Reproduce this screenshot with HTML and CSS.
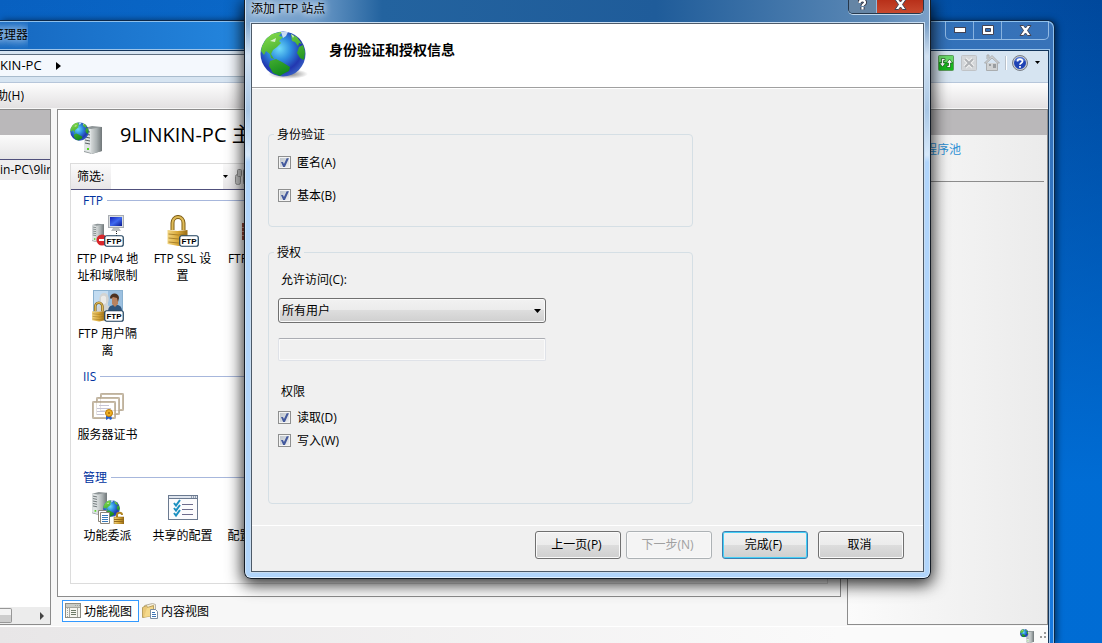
FILE: index.html
```html
<!DOCTYPE html>
<html lang="zh-CN">
<head>
  <meta charset="UTF-8" />
  <meta name="viewport" content="width=device-width, initial-scale=1" />
  <title>添加 FTP 站点</title>
  <link rel="stylesheet" href="styles.css">
</head>
<body>

  <!-- shared icon parts -->
  <svg class="defs" width="0" height="0" aria-hidden="true">
    <defs>
      <radialGradient id="sea" cx="42%" cy="38%" r="62%">
        <stop offset="0" stop-color="#6fdcf8" />
        <stop offset="0.4" stop-color="#2f8fe0" />
        <stop offset="0.8" stop-color="#2237b0" />
        <stop offset="1" stop-color="#3358c0" />
      </radialGradient>
      <linearGradient id="land" x1="0" y1="0" x2="0.4" y2="1">
        <stop offset="0" stop-color="#8be04e" />
        <stop offset="1" stop-color="#128a1c" />
      </linearGradient>
      <linearGradient id="steel" x1="0" y1="0" x2="1" y2="0">
        <stop offset="0" stop-color="#d5d9d9" />
        <stop offset="0.5" stop-color="#a9b0b1" />
        <stop offset="1" stop-color="#6f7678" />
      </linearGradient>
      <linearGradient id="gold" x1="0" y1="0" x2="1" y2="0">
        <stop offset="0" stop-color="#f3d682" />
        <stop offset="0.5" stop-color="#d9a93a" />
        <stop offset="1" stop-color="#9a6c14" />
      </linearGradient>
      <linearGradient id="screen" x1="0" y1="0" x2="1" y2="1">
        <stop offset="0" stop-color="#1220b8" />
        <stop offset="0.5" stop-color="#3f6af0" />
        <stop offset="1" stop-color="#0a1790" />
      </linearGradient>
      <radialGradient id="shade">
        <stop offset="0" stop-color="#555" stop-opacity="0.8" />
        <stop offset="1" stop-color="#555" stop-opacity="0" />
      </radialGradient>
    </defs>
    <symbol id="globe" viewBox="0 0 46 46">
      <circle cx="23" cy="23" r="22.5" fill="url(#sea)" />
      <path fill="url(#land)" d="M20 1 12 3 6 8 2 15 1 20l3 4 2-4 4 3 1 4 3 1-3-5 2-4 4-3 4-4-2-2 4-4-4-1 3-4zM31 3l6 3 5 7-3-1-1 3-3-4-3-1zM39 16l4-2 2 7-1 8-4-2-3-5zM10 30l6-2 6 3 8 5-1 4-6 3-3 2-7-3-4-7z" />
      <path fill="#fff" opacity="0.75" d="m21 1 7 0-2 4-3 2zM31 3l3 2-1 2zM10 10l6-3-1 4z" />
    </symbol>
    <symbol id="server" viewBox="0 0 18 28">
      <path fill="#8f9698" d="M0 2 8 0l10 1v24L8 28 0 26z" />
      <path fill="#dfe3e4" d="M0 2 7 3v24l-7-2z" />
      <path fill="url(#steel)" d="M7 3l11-2v24L7 28z" />
      <path stroke="#596264" d="M1 5l5 1M1 8l5 1M1 11l5 1M1 14l5 1M1 17l5 1" />
      <path fill="#55d820" d="M3 22h2v2H3z" />
    </symbol>
    <symbol id="ftp-badge" viewBox="0 0 20 12">
      <rect x="0.75" y="0.75" width="18.5" height="10.5" rx="2" fill="#fff" stroke="#1c3f5c" stroke-width="1.2" />
      <text x="10" y="9" text-anchor="middle" class="badge-text">FTP</text>
    </symbol>
    <symbol id="lock" viewBox="0 0 20 31">
      <path d="M5 15V8a5 5.500 0 0 1 11 0v7" fill="none" stroke="#80601a" stroke-width="4" />
      <path d="M5 15V8a5 5.500 0 0 1 11 0v7" fill="none" stroke="#dfbb57" stroke-width="2" />
      <path d="m0 15 10 1 10-1v14l-9 2-11-2z" fill="url(#gold)" />
      <path d="M1 19l10 1 8-1M1 23l10 1 8-1M1 27l10 1 8-1" fill="none" stroke="#9b7421" stroke-width="0.8" />
    </symbol>
    <symbol id="globe-server" viewBox="0 0 32 32">
      <use href="#server" x="14" y="4" width="18" height="28" />
      <use href="#globe" x="0" y="0" width="19" height="19" />
    </symbol>
  </svg>

  <section class="window manager">
    <header class="manager-title">
      <div class="clip title-clip"><span>管理器</span></div>
      <div class="caption-buttons">
        <button aria-label="最小化"><svg width="12" height="6" viewBox="0 0 12 6"><rect x="0.5" y="0.5" width="11" height="5" fill="#fff" stroke="#445" /></svg></button>
        <button aria-label="最大化"><svg width="12" height="10" viewBox="0 0 12 10"><path fill="#fff" stroke="#445" fill-rule="evenodd" d="M0.500 0.500h11v9h-11zM3.500 3.500v3h5v-3z" /></svg></button>
        <button class="wide" aria-label="关闭"><svg width="13" height="11" viewBox="0 0 13 11"><path fill="#fff" stroke="#445" d="M1 .5h3.500l2 2.500 2-2.500H12L8.500 5.500l3.500 5H8.500l-2-2.500-2 2.500H1l3.500-5z" /></svg></button>
      </div>
    </header>

    <div class="manager-client">
      <div class="nav-bar">
        <div class="address"><span>KIN-PC</span><svg width="5" height="8" viewBox="0 0 5 8"><path d="m0 0 5 4-5 4z" /></svg></div>
        <div class="nav-tools">
          <button aria-label="刷新"><svg width="16" height="16" viewBox="0 0 16 16"><rect x="0.5" y="0.5" width="15" height="15" rx="1" fill="#16b81c" stroke="#5a9a5a" /><path fill="#8be58a" opacity="0.7" d="M1 1h14v6H1z" /><path fill="#fff" stroke="#145c16" stroke-width="0.700" d="M7 3.500H3.500V8H1.500l3 4 3-4h-2V5.500H7zM9 12.500h3.500V8h2l-3-4-3 4h2v2.500H9z" /></svg></button>
          <button aria-label="停止"><svg width="16" height="16" viewBox="0 0 16 16"><rect x="0.5" y="0.5" width="15" height="15" rx="1" fill="#d3d6d9" stroke="#c0c3c6" /><path stroke="#f2f2f2" stroke-width="4" d="m4 4 8 8m0-8-8 8" /><path stroke="#b0b3b6" stroke-width="2" d="m4 4 8 8m0-8-8 8" /></svg></button>
          <button aria-label="主页"><svg width="16" height="17" viewBox="0 0 16 17"><path fill="#d0d2d3" stroke="#aaadaf" d="M2.500 9v7.500h11V9M0.500 9 8 1.500 15.500 9h-2L8 4 2.500 9zM3 5V1h2v3" /><path fill="#999da0" d="M5 10h2v2H5zM9 10h3v4H9z" /></svg></button>
          <i class="divider"></i>
          <button aria-label="帮助"><svg width="16" height="16" viewBox="0 0 16 16"><circle cx="8" cy="8" r="7.500" fill="#c9ccd2" stroke="#777d86" /><circle cx="8" cy="8" r="6" fill="#1f43b5" /><path fill="#6f93e6" opacity="0.6" d="M3 6a5 4 0 0 1 10 0z" /><path fill="none" stroke="#fff" stroke-width="1.800" d="M5.500 6.500C5.500 3.500 10.500 3.500 10.500 6.300 10.500 8 8 8 8 9.800M8 11v1.800" /></svg></button>
          <svg width="5" height="3" viewBox="0 0 5 3"><path d="M0 0h5L2.500 3z" /></svg>
        </div>
      </div>

      <div class="menu-bar"><div class="clip menu-clip"><span>帮助(H)</span></div></div>

      <div class="panes">
        <aside class="tree-pane">
          <div class="pane-head"></div>
          <div class="tree-tools"></div>
          <div class="tree-row">in-PC\9lin</div>
          <div class="scroll-bar"><i class="thumb"></i><svg width="4" height="8" viewBox="0 0 4 8"><path fill="#444" d="m0 0 4 4-4 4z" /></svg></div>
        </aside>

        <main class="center">
          <div class="home">
            <div class="home-head">
              <svg width="32" height="32"><use href="#globe-server" /></svg>
              <h1>9LINKIN-PC 主页</h1>
            </div>
            <div class="features">
              <div class="filter">
                <label for="filter">筛选:</label>
                <input id="filter" type="text">
                <svg width="5" height="3" viewBox="0 0 5 3"><path d="M0 0h5L2.500 3z" /></svg>
                <svg class="find" width="16" height="16" viewBox="0 0 16 16"><g fill="#c4c4c4" stroke="#8c8c8c"><rect x="0.500" y="5.500" width="5" height="10" rx="2" /><rect x="2.500" y="0.500" width="4" height="7" rx="1" /><rect x="8.500" y="5.500" width="5" height="10" rx="2" /><rect x="8.500" y="0.500" width="4" height="7" rx="1" /></g></svg>
              </div>

              <section class="group">
                <h2>FTP</h2>
                <div class="items">
                  <a href="#" class="item">
                    <svg width="32" height="32" viewBox="0 0 32 32">
                      <use href="#server" x="0" y="8" width="12" height="20" />
                      <circle cx="10" cy="25" r="5.500" fill="#d8262a" /><path stroke="#fff" stroke-width="2" d="M7 25h6" />
                      <rect x="16.500" y="0.500" width="15" height="12" fill="#d9dde0" stroke="#a9adb2" /><path fill="url(#screen)" d="M18 2h12v9H18z" />
                      <path fill="#b9bdc0" d="M21 13h6l2 3H19z" /><path stroke="#222" stroke-dasharray="1 1" d="M24.500 16v5" />
                      <use href="#ftp-badge" x="12" y="20" width="20" height="12" />
                    </svg>
                    <span>FTP IPv4 地址和域限制</span>
                  </a>
                  <a href="#" class="item">
                    <svg width="32" height="32" viewBox="0 0 32 32">
                      <use href="#lock" x="0" y="0" width="21" height="31" />
                      <use href="#ftp-badge" x="12" y="20" width="20" height="12" />
                    </svg>
                    <span>FTP SSL 设置</span>
                  </a>
                  <a href="#" class="item">
                    <svg width="32" height="32" viewBox="0 0 32 32"><path fill="#9c4a3c" d="M0 8h24v17H0z" /><path stroke="#d9a596" d="M0 12.500h24M0 16.500h24M0 20.500h24" /><use href="#ftp-badge" x="12" y="20" width="20" height="12" /></svg>
                    <span>FTP 防火墙支持</span>
                  </a>
                </div>
                <div class="items">
                  <a href="#" class="item">
                    <svg width="32" height="32" viewBox="0 0 32 32">
                      <rect x="1.500" y="0.500" width="29" height="22" fill="#c3dcf1" stroke="#8ab1d0" />
                      <path fill="#9cc0e0" d="M16 1h14v21H16z" />
                      <path fill="#d3d4d2" d="M5 22c0-6 2-6 4-7-3-4-2-12 3-12s6 7 3 12c2 1 4 2 4 7z" /><path fill="#ecebe8" d="M9 7c2-2 4-1 5 0v6l-3 2-2-2z" />
                      <path fill="#31557d" d="M16 22c0-5 2-6 5-7h5c3 1 4 3 4 7z" /><path fill="#b98260" d="M20 7h6v7l-3 3-3-3z" /><path fill="#4d3120" d="M18 8c0-6 9-6 9 0l-1 4-1-4-4-1-2 2z" />
                      <use href="#lock" x="0" y="11" width="13" height="21" />
                      <use href="#ftp-badge" x="12" y="20" width="20" height="12" />
                    </svg>
                    <span>FTP 用户隔离</span>
                  </a>
                </div>
              </section>

              <section class="group">
                <h2>IIS</h2>
                <div class="items">
                  <a href="#" class="item">
                    <svg width="32" height="32" viewBox="0 0 32 32">
                      <g fill="#fff" stroke="#c9bda8" stroke-width="2">
                        <rect x="9" y="3" width="22" height="16" rx="1" /><rect x="5" y="7" width="22" height="16" rx="1" /><rect x="1" y="11" width="22" height="16" rx="1" />
                      </g>
                      <g fill="none" stroke="#9c8f7c" stroke-width="0.500" stroke-dasharray="1 1"><rect x="8.500" y="2.500" width="23" height="17" /><rect x="4.500" y="6.500" width="23" height="17" /><rect x="0.500" y="10.500" width="23" height="17" /></g>
                      <path stroke="#c6c4d4" d="M7 14.500h10M5 17.500h14M5 20.500h8M5 23.500h7" />
                      <path fill="#2460d0" d="m14 25 0 4 2-1 1-1 1 2 2-1-1-4z" /><circle cx="17" cy="22" r="3.500" fill="#efb025" stroke="#b97a0a" /><circle cx="17" cy="22" r="1" fill="#a56a05" />
                    </svg>
                    <span>服务器证书</span>
                  </a>
                </div>
              </section>

              <section class="group">
                <h2>管理</h2>
                <div class="items">
                  <a href="#" class="item">
                    <svg width="32" height="32" viewBox="0 0 32 32">
                      <use href="#server" x="0" y="0" width="15" height="23" />
                      <use href="#globe" x="11" y="8" width="17" height="17" />
                      <path fill="#fff" stroke="#8a8479" d="M6.500 18.500h8v11h-8z" /><path fill="#fff" stroke="#8a8479" d="M8.500 20.500h9v11h-9z" />
                      <path stroke="#3a7ab8" d="M10 23.500h6M10 25.500h6M10 27.500h6M10 29.500h6" />
                      <path fill="none" stroke="#b38622" stroke-width="2" d="M25 26v-3c0-3 5-3 5 0" /><path fill="url(#gold)" stroke="#8d6514" stroke-width="0.500" d="M22 25h10v7H22z" /><path stroke="#94691a" d="M22 27.500h10M22 29.500h10" />
                    </svg>
                    <span>功能委派</span>
                  </a>
                  <a href="#" class="item">
                    <svg width="32" height="32" viewBox="0 0 32 32">
                      <rect x="1.500" y="3.500" width="29" height="24" fill="#fbfbfd" stroke="#6b7a90" /><path fill="#dfe5ee" d="M2 4h28v2H2z" /><path stroke="#6b7a90" d="M2 6.500h28" /><path stroke="#4d5a70" stroke-dasharray="1 1" d="M24 5h5" />
                      <path stroke="#6d6c8d" d="M15 12.500h11M15 17.500h11M15 22.500h11" />
                      <path fill="none" stroke="#1b8fc0" stroke-width="2" d="m7 11 2 2.500L13 8M7 16l2 2.500 4-5.500M7 21l2 2.500 4-5.500" />
                    </svg>
                    <span>共享的配置</span>
                  </a>
                  <a href="#" class="item">
                    <svg width="32" height="32" viewBox="0 0 32 32"><rect x="3.500" y="3.500" width="25" height="24" fill="#fbfbfd" stroke="#6b7a90" /></svg>
                    <span>配置编辑器</span>
                  </a>
                </div>
              </section>
            </div>
          </div>

          <div class="view-tabs">
            <button class="active">
              <svg width="16" height="16" viewBox="0 0 16 16"><rect x="0.500" y="0.500" width="15" height="14" fill="#f6f5ef" stroke="#8b8c84" /><path fill="#c8cbc5" d="M1 1h14v3H1z" /><path stroke="#a5a69e" d="M1 4.500h14M4.500 5v9M12.500 5v9" /><path stroke="#6d7a67" d="M6 7.500h5M6 9.500h5M6 11.500h5" /><path stroke="#a5a69e" stroke-dasharray="1 1" d="M2.500 5v9M10 2.500h5" /></svg>
              <span>功能视图</span>
            </button>
            <button>
              <svg width="16" height="16" viewBox="0 0 16 16"><path fill="#f6efdc" stroke="#b9b3a3" d="M2.500 2.500l8-2 3 1v8h-10z" /><path fill="#e9c878" stroke="#b8a060" d="M0.500 14.500v-10l4-2 1 2 6-2v10z" /><path fill="#f5d98a" d="m2 14 3-9 6-1v9z" /><path fill="#fff" stroke="#7c8da0" d="M8.500 6.500h5l2 2v7h-7z" /><path stroke="#3d75b5" d="M10 9.500h3M10 11.500h4M10 13.500h4" /></svg>
              <span>内容视图</span>
            </button>
          </div>
        </main>

        <aside class="actions">
          <div class="pane-head"></div>
          <a href="#">查看应用程序池</a>
          <hr>
        </aside>
      </div>

      <footer class="status">
        <svg width="14" height="14" viewBox="0 0 32 32"><use href="#globe-server" /></svg>
        <svg width="8" height="8" viewBox="0 0 8 8"><path fill="#999" d="M5 0h2v2H5zM5 4h2v2H5zM1 4h2v2H1z" /></svg>
      </footer>
    </div>
  </section>

  <section class="window dialog" role="dialog" aria-labelledby="dialog-title">
    <header class="dialog-title">
      <span id="dialog-title">添加 FTP 站点</span>
      <div class="caption-buttons">
        <button aria-label="帮助"><svg width="9" height="11" viewBox="0 0 9 11"><path fill="none" stroke="#334" stroke-width="4" d="M1.500 4C1.500 .5 7 .5 7 3.500 7 5.500 4.500 5 4.500 7M4.500 8v2.500" /><path fill="none" stroke="#fff" stroke-width="2.200" d="M1.500 4C1.500 .5 7 .5 7 3.500 7 5.500 4.500 5 4.500 7M4.500 8v2.500" /></svg></button>
        <button class="wide close" aria-label="关闭"><svg width="13" height="11" viewBox="0 0 13 11"><path fill="#fff" stroke="#445" d="M1 .5h3.500l2 2.500 2-2.500H12L8.500 5.500l3.500 5H8.500l-2-2.500-2 2.500H1l3.500-5z" /></svg></button>
      </div>
    </header>

    <form class="dialog-client">
      <div class="banner">
        <svg width="48" height="50" viewBox="0 0 48 50"><ellipse cx="28" cy="44" rx="20" ry="5" fill="url(#shade)" /><use href="#globe" x="0" y="1" width="46" height="46" /></svg>
        <h2>身份验证和授权信息</h2>
      </div>

      <div class="page">
        <fieldset class="auth">
          <legend>身份验证</legend>
          <label class="check"><input type="checkbox" checked><span>匿名(A)</span></label>
          <label class="check"><input type="checkbox" checked><span>基本(B)</span></label>
        </fieldset>

        <fieldset class="access">
          <legend>授权</legend>
          <label class="caption" for="allow">允许访问(C):</label>
          <div class="select">
            <select id="allow"><option>所有用户</option></select>
          </div>
          <input class="users" type="text" aria-label="用户" disabled>
          <p class="caption">权限</p>
          <label class="check"><input type="checkbox" checked><span>读取(D)</span></label>
          <label class="check"><input type="checkbox" checked><span>写入(W)</span></label>
        </fieldset>
      </div>

      <div class="buttons">
        <div class="steps">
          <button type="button">上一页(P)</button>
          <button type="button" disabled>下一步(N)</button>
        </div>
        <button type="button" class="default">完成(F)</button>
        <button type="button">取消</button>
      </div>
    </form>
  </section>

</body>
</html>
```
FILE: styles.css
```css
* {
  box-sizing: border-box;
}
body {
  margin: 0;
  height: 100vh;
  overflow: hidden;
  position: relative;
  background: linear-gradient(180deg, rgba(0, 112, 218, 0), rgba(0, 112, 218, 0.9) 75%), linear-gradient(90deg, #0860c0, #0a68c8 25%, #0658b0 70%, #00489c);
  font: 12px/17px "Open Sans", "Noto Sans CJK SC", sans-serif;
  color: #000;
}
button, input, select {
  font: inherit;
  color: inherit;
}
a {
  color: inherit;
  text-decoration: none;
}
h1, h2, p {
  margin: 0;
  font-weight: normal;
}
svg {
  flex: none;
  display: block;
}
.defs {
  position: absolute;
}
.badge-text {
  font: bold 8px "Liberation Sans", sans-serif;
}
.window {
  position: absolute;
  display: flex;
  flex-direction: column;
}
.clip {
  display: flex;
  justify-content: flex-end;
  overflow: hidden;
  white-space: nowrap;
}

/* caption buttons */
.caption-buttons {
  display: flex;
  align-self: flex-start;
  border: 1px solid rgba(170, 205, 240, 0.8);
  border-top: 0;
  border-radius: 0 0 5px 5px;
  overflow: hidden;
}
.caption-buttons button {
  width: 28px;
  height: 18px;
  padding: 0;
  border: 0;
  border-right: 1px solid rgba(170, 205, 240, 0.7);
  background: none;
  display: flex;
  align-items: center;
  justify-content: center;
}
.caption-buttons .wide {
  width: 46px;
  border-right: 0;
}

/* IIS manager */
.manager {
  top: 20px;
  left: 0;
  right: 47px;
  bottom: 0;
  padding-right: 5px;
  border: 1px solid #0b2748;
  border-width: 1px 1px 0 0;
  border-radius: 0 7px 0 0;
  background: linear-gradient(180deg, rgba(23, 121, 224, 0) 60px, #1779e0 600px), linear-gradient(90deg, #1668c0, #2384dc 22%, #2870bc 70%, #3872b8);
  box-shadow: inset -1px 1px 0 #8ec0ec, 2px 0 6px rgba(0, 0, 0, 0.5);
}
.manager-title {
  height: 29px;
  display: flex;
  justify-content: space-between;
}
.title-clip {
  width: 28px;
  padding-top: 5px;
  text-shadow: 0 0 8px #fff, 0 0 12px #cfe4fa;
}
.manager-client {
  flex: 1;
  min-height: 0;
  display: flex;
  flex-direction: column;
  border: 1px solid #12355c;
  border-width: 1px 1px 0 0;
  box-shadow: 0 0 0 1px #9cc4ea;
  background: #f7f7f7;
}
.nav-bar {
  height: 32px;
  padding: 3px 8px 5px 0;
  display: flex;
  justify-content: space-between;
  background: #d6e4f1;
  border-bottom: 1px solid #b6c6da;
}
.address {
  width: 80%;
  display: flex;
  align-items: center;
  gap: 14px;
  height: 23px;
  background: #f4f8fd;
  border: 1px solid #5f6f80;
  border-width: 1px 0;
  border-bottom-color: #a9bccd;
  font-size: 13px;
}
.nav-tools {
  display: flex;
  align-items: center;
  gap: 7px;
  margin-bottom: 6px;
}
.nav-tools button {
  padding: 0;
  border: 0;
  background: none;
}
.divider {
  width: 2px;
  height: 14px;
  margin: 0 -2px;
  background: #b9c1ca;
  border-right: 1px solid #fff;
}
.menu-bar {
  height: 26px;
  padding-top: 4px;
  background: linear-gradient(#fdfdfd, #e3e1e2);
  border-bottom: 1px solid #f7f7f7;
}
.menu-clip {
  width: 24px;
}
.panes {
  flex: 1;
  min-height: 0;
  display: grid;
  grid-template-columns: 51px 1fr 201px;
  gap: 6px;
  padding-bottom: 1px;
}
.pane-head {
  height: 25px;
  background: #bab8ba;
}
.tree-pane {
  display: flex;
  flex-direction: column;
  border: 1px solid #8c8c8c;
  border-left: 0;
  background: #fff;
  overflow: hidden;
  white-space: nowrap;
}
.tree-tools {
  height: 25px;
  background: linear-gradient(#fbfbfb, #e6e5e6);
  border-bottom: 1px solid #50507c;
}
.tree-row {
  height: 20px;
  line-height: 20px;
  background: #eeedee;
}
.scroll-bar {
  margin-top: auto;
  height: 17px;
  padding-right: 6px;
  display: flex;
  align-items: center;
  justify-content: space-between;
  background: #ececec;
}
.thumb {
  width: 12px;
  height: 15px;
  border: 1px solid #979797;
  border-left: 0;
  border-radius: 0 2px 2px 0;
  background: linear-gradient(#f3f3f3 50%, #cdcdcd 50%);
}
.center {
  min-width: 0;
  min-height: 0;
  display: flex;
  flex-direction: column;
}
.home {
  flex: 1;
  min-height: 0;
  display: flex;
  flex-direction: column;
  padding: 0 12px 12px;
  border: 1px solid #8c8c8c;
  background: #fff;
}
.home-head {
  height: 53px;
  padding-top: 12px;
  display: flex;
  align-items: flex-start;
  gap: 18px;
}
.home-head h1 {
  font-size: 20px;
  line-height: 26px;
}
.features {
  flex: 1;
  min-height: 0;
  border: 1px solid #dcdcdc;
}
.filter {
  height: 26px;
  margin-bottom: 2px;
  display: flex;
  align-items: center;
  background: linear-gradient(#fafafa, #e8e6e8);
  border-bottom: 1px solid #50507c;
}
.filter label {
  width: 40px;
  padding-left: 6px;
}
.filter input {
  width: 112px;
  height: 25px;
  border: 0;
  background: #fff;
}
.filter .find {
  margin-left: 7px;
}
.group {
  padding-bottom: 3px;
}
.group h2 {
  display: flex;
  align-items: center;
  gap: 4px;
  margin: 0 12px 6px;
  font-size: 12px;
  line-height: 17px;
  color: #0033a0;
}
.group h2::after {
  content: "";
  flex: 1;
  height: 1px;
  background: #a7b7dc;
}
.items {
  display: flex;
  margin-left: -1px;
}
.item {
  width: 75px;
  height: 75px;
  padding: 0 4px;
  display: flex;
  flex-direction: column;
  align-items: center;
  gap: 3px;
  text-align: center;
}
.view-tabs {
  display: flex;
  padding: 3px 5px;
}
.view-tabs button {
  height: 22px;
  padding: 0 6px 0 2px;
  display: flex;
  align-items: center;
  gap: 3px;
  border: 1px solid transparent;
  background: none;
}
.view-tabs .active {
  border-color: #3399ff;
  background: #fff;
}
.actions {
  border: 1px solid #8c8c8c;
  background: linear-gradient(90deg, #fbfbfb, #ebebeb);
}
.actions a {
  display: block;
  padding: 6px 0 0 29px;
  color: #2c90d4;
}
.actions hr {
  margin: 23px 3px 0;
  border: 0;
  border-top: 1px solid #8c8c8c;
}
.status {
  height: 17px;
  padding: 1px 1px 0;
  display: flex;
  align-items: center;
  justify-content: flex-end;
  gap: 5px;
  border-top: 1px solid #fff;
  background: linear-gradient(90deg, #e8e6e7, #fafafa 80%);
}

/* add site dialog */
.dialog {
  top: 0;
  left: 244px;
  right: 171px;
  padding: 0 6px 6px;
  border: 1px solid #141c26;
  border-top: 0;
  border-radius: 0 0 7px 7px;
  background: linear-gradient(180deg, rgba(190, 216, 242, 0) 24px, #d3e2f2 56px, #aac8e6 110px, #d6e8fa 155px, #b1d5fb 162px), linear-gradient(90deg, #86acd2, #6f9cc9 10%, #23639f 20%, #1f5c9a 60%, #5b88b5 92%, #7ba0c8);
  box-shadow: inset 0 -1px 0 #e3f1ff, inset 1px 0 0 #cfe3f6, inset -1px 0 0 #cfe3f6, 0 4px 16px 2px rgba(0, 0, 0, 0.8);
}
.dialog-title {
  height: 23px;
  display: flex;
  justify-content: space-between;
  text-shadow: 0 0 6px #fff, 0 0 10px #fff;
}
.dialog-title .caption-buttons {
  height: 14px;
  border-color: #26384c;
  box-shadow: 0 1px 0 #c3d8ec;
}
.dialog-title .caption-buttons button {
  height: 14px;
  padding-bottom: 5px;
  background: #6585a5;
}
.dialog-title .caption-buttons .close {
  background: linear-gradient(#b8301a, #c94b30);
}
.dialog-client {
  display: flex;
  flex-direction: column;
  border: 1px solid #4d5a68;
  box-shadow: 0 0 0 1px #c8ddf2;
  background: #f0f0f0;
}
.banner {
  height: 64px;
  padding: 6px 8px;
  display: flex;
  gap: 21px;
  background: #fff;
  border-bottom: 1px solid #a0a0a0;
}
.banner h2 {
  padding-top: 10px;
  font-size: 14px;
  line-height: 20px;
  font-weight: bold;
}
.page {
  padding: 37px 16px 21px;
  border-top: 1px solid #fff;
}
fieldset {
  max-width: 425px;
  margin: 0;
  border: 1px solid #d5dfe5;
  border-radius: 4px;
  display: flex;
  flex-direction: column;
}
legend {
  padding: 0 3px;
}
.auth {
  padding: 11px 9px 22px 5px;
  gap: 16px;
}
.access {
  margin-top: 17px;
  padding: 10px 9px 54px 5px;
}
.check {
  display: flex;
  align-items: center;
  gap: 6px;
  padding-left: 4px;
}
.access .check {
  margin-bottom: 6px;
}
.check input {
  appearance: none;
  width: 13px;
  height: 13px;
  margin: 0;
  border: 1px solid #8e8f8f;
  background: linear-gradient(135deg, #b8c0c8, #f3f3f3);
  box-shadow: inset 0 0 0 1px #f4f4f4;
}
.check input:checked::after {
  content: "";
  display: block;
  width: 11px;
  height: 11px;
  background: #43599d;
  clip-path: polygon(18% 45%, 36% 45%, 45% 64%, 70% 12%, 90% 12%, 54% 92%, 38% 92%);
}
.caption {
  padding-left: 7px;
}
.select {
  position: relative;
  width: 268px;
  margin: 10px 4px 15px;
}
.select::after {
  content: "";
  position: absolute;
  top: 11px;
  right: 5px;
  width: 7px;
  height: 4px;
  background: #000;
  clip-path: polygon(0 0, 100% 0, 50% 100%);
  pointer-events: none;
}
.select select {
  appearance: none;
  display: block;
  width: 100%;
  height: 25px;
  padding: 0 3px;
}
.select select, .buttons button {
  border: 1px solid #707070;
  border-radius: 3px;
  background: linear-gradient(#f2f2f2, #ebebeb 50%, #dddddd 50%, #cfcfcf);
  box-shadow: inset 0 0 0 1px #fafafa;
}
.users {
  width: 268px;
  height: 23px;
  margin: 0 4px 22px;
  border: 1px solid #dfe2e8;
  border-top-color: #abadb3;
  border-radius: 2px;
  background: #f0f0f0;
  box-shadow: inset 0 0 0 1px #fafafa;
}
p.caption {
  margin-bottom: 9px;
}
.access .check:last-child {
  margin-bottom: 0;
}
.buttons {
  display: flex;
  justify-content: flex-end;
  gap: 10px;
  padding: 5px 19px 12px;
  border-top: 1px solid #fff;
}
.steps {
  display: flex;
  gap: 5px;
}
.buttons button {
  width: 86px;
  height: 28px;
  padding: 0 3px 2px 0;
}
.buttons button:disabled {
  border-color: #adb2b5;
  background: #f4f4f4;
  color: #a0a0a0;
}
.buttons .default {
  border-color: #3c7fb1;
  box-shadow: inset 0 0 0 1px #45d0f7;
}
```
